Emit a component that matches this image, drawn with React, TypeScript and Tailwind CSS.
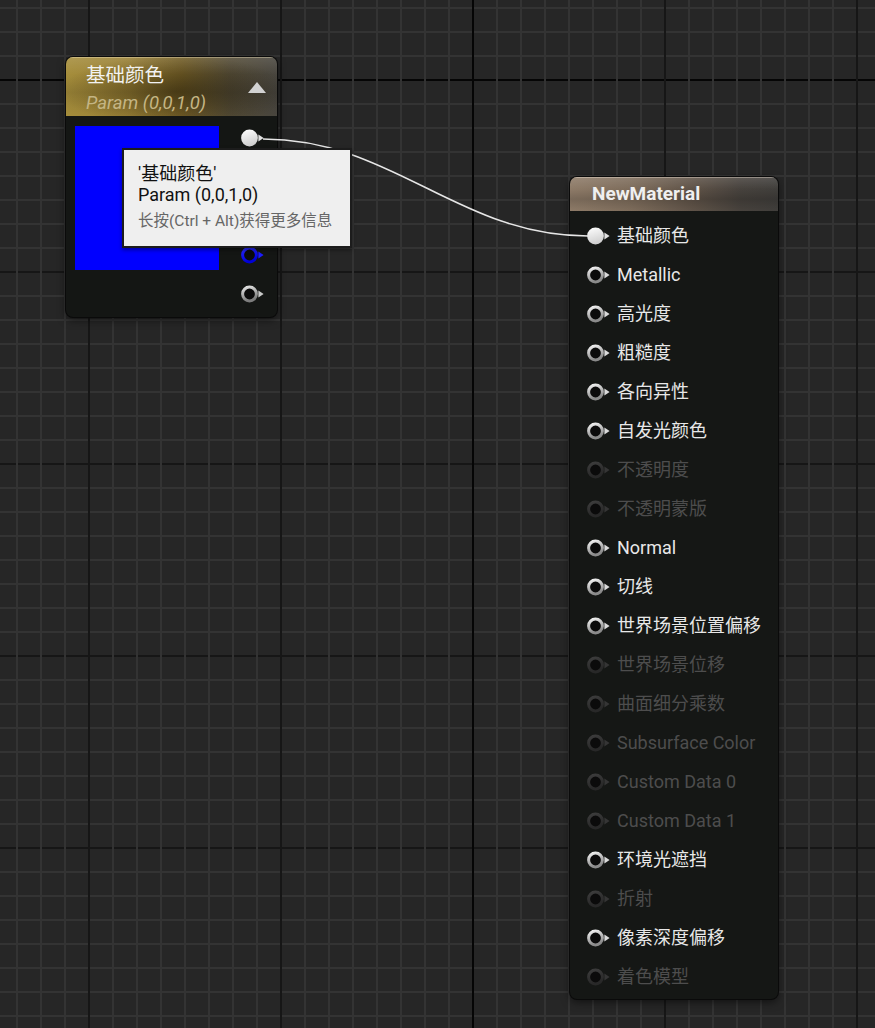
import { useId } from "react";

type PinKind = "linked" | "on" | "off" | "blue" | "red" | "green" | "grey";

const PIN_COLORS: Record<PinKind, { top: string; bottom: string; arrow: string }> = {
  linked: { top: "#ffffff", bottom: "#d0d0d0", arrow: "#e2e2e2" },
  on: { top: "#f2f2f2", bottom: "#8a8a8a", arrow: "#dadada" },
  off: { top: "#3c3c3c", bottom: "#282828", arrow: "#353535" },
  blue: { top: "#2a2aff", bottom: "#0000d8", arrow: "#1c1cff" },
  red: { top: "#ff3030", bottom: "#e00000", arrow: "#ff1c1c" },
  green: { top: "#30ff30", bottom: "#00e000", arrow: "#1cff1c" },
  grey: { top: "#e4e4e4", bottom: "#7c7c7c", arrow: "#c8c8c8" },
};

function Pin({ kind }: { kind: PinKind }) {
  const id = useId().replace(/:/g, "");
  const c = PIN_COLORS[kind];
  return (
    <svg width="23" height="18" viewBox="0 0 23 18" className="shrink-0">
      <defs>
        <linearGradient id={`g${id}`} x1="0" y1="0" x2="0.3" y2="1">
          <stop offset="0" stopColor={c.top} />
          <stop offset="1" stopColor={c.bottom} />
        </linearGradient>
      </defs>
      {kind === "linked" ? (
        <circle cx="8.5" cy="9" r="8.4" fill={`url(#g${id})`} />
      ) : (
        <circle cx="8.5" cy="9" r="6.9" fill="#0b0b0b" stroke={`url(#g${id})`} strokeWidth="3" />
      )}
      <polygon points="17.4,5.6 22.6,9 17.4,12.4" fill={c.arrow} />
    </svg>
  );
}

function Grid() {
  const xs = Array.from({ length: 37 }, (_, k) => 16 + 24 * k);
  const ys = Array.from({ length: 43 }, (_, k) => 7 + 24 * k);
  const shade = (v: number, base: number, axis: number) =>
    v === axis ? "#050505" : (v - base) % 192 === 0 ? "#161616" : "#333333";
  return (
    <svg className="absolute inset-0" width="875" height="1028">
      {ys.map((y) => (
        <rect key={`h${y}`} x="0" y={y} width="875" height="2" fill={shade(y, 79, 79)} />
      ))}
      {xs.map((x) => (
        <rect key={`v${x}`} x={x} y="0" width="2" height="1028" fill={shade(x, 88, 472)} />
      ))}
    </svg>
  );
}

const inputs: { label: string; kind: PinKind }[] = [
  { label: "基础颜色", kind: "linked" },
  { label: "Metallic", kind: "on" },
  { label: "高光度", kind: "on" },
  { label: "粗糙度", kind: "on" },
  { label: "各向异性", kind: "on" },
  { label: "自发光颜色", kind: "on" },
  { label: "不透明度", kind: "off" },
  { label: "不透明蒙版", kind: "off" },
  { label: "Normal", kind: "on" },
  { label: "切线", kind: "on" },
  { label: "世界场景位置偏移", kind: "on" },
  { label: "世界场景位移", kind: "off" },
  { label: "曲面细分乘数", kind: "off" },
  { label: "Subsurface Color", kind: "off" },
  { label: "Custom Data 0", kind: "off" },
  { label: "Custom Data 1", kind: "off" },
  { label: "环境光遮挡", kind: "on" },
  { label: "折射", kind: "off" },
  { label: "像素深度偏移", kind: "on" },
  { label: "着色模型", kind: "off" },
];

function ParamNode() {
  const outputs: PinKind[] = ["linked", "red", "green", "blue", "grey"];
  return (
    <div className="absolute left-[66px] top-[57px] w-[211px] h-[260px] rounded-[7px] overflow-hidden bg-[#141614] shadow-[0_0_0_1px_#0a0a0a,0_3px_8px_rgba(0,0,0,0.55)]">
      <div className="h-[59px] flex items-center pl-[20px] pr-[11px] bg-[radial-gradient(ellipse_55%_60%_at_52%_58%,rgba(20,14,0,0.4),rgba(20,14,0,0)_100%),linear-gradient(to_bottom,rgba(255,255,255,0.12)_0%,rgba(255,255,255,0)_30%,rgba(0,0,0,0.1)_60%,rgba(0,0,0,0)_100%),linear-gradient(to_right,#a58d3b_0%,#987f35_30%,#745f27_55%,#524a35_78%,#48453e_100%)] shadow-[inset_0_1px_0_rgba(255,240,200,0.35)]">
        <div className="flex flex-col mt-[6px]">
          <span className="text-[19.5px] leading-[22px] text-[#f2f2f2]">基础颜色</span>
          <span className="mt-[5px] text-[18.5px] leading-[22px] italic text-[#c4b584]">Param (0,0,1,0)</span>
        </div>
        <svg width="18" height="11" viewBox="0 0 18 11" className="ml-auto mt-[2px]">
          <polygon points="9,0 18,11 0,11" fill="#d2d2d2" />
        </svg>
      </div>
      <div className="flex justify-between">
        <div className="ml-[9px] mt-[10px] w-[144px] h-[144px] bg-[#0000ff]" />
        <div className="flex flex-col pt-[2px] pr-[13px]">
          {outputs.map((k, i) => (
            <div key={i} className="h-[39px] flex items-center">
              <Pin kind={k} />
            </div>
          ))}
        </div>
      </div>
    </div>
  );
}

function MaterialNode() {
  return (
    <div className="absolute left-[570px] top-[177px] w-[208px] h-[822px] rounded-[7px] overflow-hidden bg-[#151715] shadow-[0_0_0_1px_#0a0a0a,0_3px_8px_rgba(0,0,0,0.55)]">
      <div className="h-[34px] flex items-center pl-[22px] bg-[linear-gradient(to_bottom,rgba(255,255,255,0.12)_0%,rgba(255,255,255,0)_35%,rgba(0,0,0,0.15)_65%,rgba(0,0,0,0)_100%),linear-gradient(to_right,#8e7b68_0%,#7d6c5b_30%,#5e5247_60%,#47423d_82%,#403e3b_100%)] shadow-[inset_0_1px_0_rgba(255,240,225,0.35)]">
        <span className="text-[19px] font-bold text-[#efefef]">NewMaterial</span>
      </div>
      <div className="flex flex-col pt-[5px] pl-[17px]">
        {inputs.map((row) => (
          <div key={row.label} className="h-[39px] flex items-center gap-[7px]">
            <Pin kind={row.kind} />
            <span className={`text-[18px] ${row.kind === "off" ? "text-[#4d4d4d]" : "text-[#e8e8e8]"}`}>
              {row.label}
            </span>
          </div>
        ))}
      </div>
    </div>
  );
}

function Tooltip() {
  return (
    <div className="absolute left-[122px] top-[148px] w-[230px] h-[100px] bg-[#efefef] border-2 border-[#1c1c1c] pl-[14px] pt-[13px] shadow-[0_2px_4px_rgba(0,0,0,0.4)]">
      <div className="text-[18px] leading-[21px] text-[#111111]">'基础颜色'</div>
      <div className="text-[18px] leading-[21px] text-[#111111]">Param (0,0,1,0)</div>
      <div className="mt-[6px] text-[15.5px] leading-[20px] text-[#666666]">长按(Ctrl + Alt)获得更多信息</div>
    </div>
  );
}

export default function App() {
  return (
    <div className="relative w-[875px] h-[1028px] overflow-hidden bg-[#262626] font-[Roboto,'Noto_Sans_CJK_SC',sans-serif]">
      <Grid />
      <ParamNode />
      <MaterialNode />
      <svg className="absolute inset-0 pointer-events-none" width="875" height="1028">
        <path d="M 263 139 C 393 139, 458 236, 588 236" fill="none" stroke="#e6e6e6" strokeWidth="1.6" />
      </svg>
      <Tooltip />
    </div>
  );
}
